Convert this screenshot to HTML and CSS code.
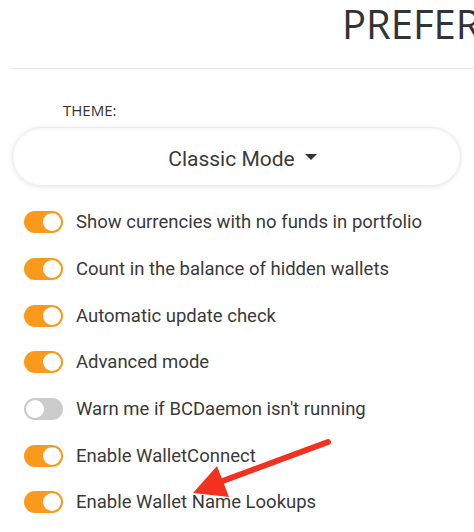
FILE: index.html
```html
<!DOCTYPE html>
<html>
<head>
<meta charset="utf-8">
<link rel="stylesheet" href="styles.css">
</head>
<body>
<div class="page">
  <header class="header">
    <h1 class="title">PREFERENCES</h1>
  </header>
  <section class="theme">
    <div class="theme-label">THEME:</div>
    <div class="select">
      <span class="select-text">Classic Mode</span>
      <span class="caret"></span>
    </div>
  </section>
  <ul class="options">
    <li class="option"><span class="toggle on"><span class="knob"></span></span><span class="label">Show currencies with no funds in portfolio</span></li>
    <li class="option"><span class="toggle on"><span class="knob"></span></span><span class="label">Count in the balance of hidden wallets</span></li>
    <li class="option"><span class="toggle on"><span class="knob"></span></span><span class="label">Automatic update check</span></li>
    <li class="option"><span class="toggle on"><span class="knob"></span></span><span class="label">Advanced mode</span></li>
    <li class="option"><span class="toggle off"><span class="knob"></span></span><span class="label">Warn me if BCDaemon isn't running</span></li>
    <li class="option"><span class="toggle on"><span class="knob"></span></span><span class="label">Enable WalletConnect</span></li>
    <li class="option"><span class="toggle on"><span class="knob"></span></span><span class="label">Enable Wallet Name Lookups</span></li>
  </ul>
  <svg class="arrow" width="474" height="532" viewBox="0 0 474 532" xmlns="http://www.w3.org/2000/svg">
    <line x1="328" y1="442" x2="220" y2="482" stroke="#f2321f" stroke-width="6" stroke-linecap="round"/>
    <polygon points="193,493 217,466 229,497" fill="#f2321f"/>
  </svg>
</div>
</body>
</html>
```
FILE: styles.css
```css
html, body {
  margin: 0;
  padding: 0;
  background: #ffffff;
}
.page {
  position: relative;
  width: 474px;
  height: 532px;
  overflow: hidden;
  background: #ffffff;
}
.header {
  margin-left: 12px;
  border-bottom: 1px solid #e6e6e6;
  box-sizing: border-box;
  height: 69px;
  overflow: hidden;
}
.title {
  margin: 0;
  padding-left: 330px;
  font-family: "Open Sans", sans-serif;
  font-weight: 400;
  font-size: 40px;
  line-height: 48px;
  color: #333333;
  white-space: nowrap;
}
.theme {
  margin-top: 31px;
}
.theme-label {
  margin-left: 63px;
  font-family: "Open Sans", sans-serif;
  font-size: 15px;
  line-height: 20px;
  color: #333333;
}
.select {
  margin: 7px 0 0 12px;
  width: 449px;
  height: 59px;
  box-sizing: border-box;
  border: 1px solid #ebebeb;
  border-radius: 30px;
  box-shadow: 0 1px 5px rgba(0,0,0,0.10), inset 0 2px 3px rgba(0,0,0,0.035);
  display: flex;
  align-items: center;
  justify-content: center;
  gap: 10px;
  padding: 4px 0 0 12px;
}
.select-text {
  font-family: Roboto, sans-serif;
  font-size: 21px;
  color: #3a3a3a;
}
.caret {
  width: 0;
  height: 0;
  border-left: 6px solid transparent;
  border-right: 6px solid transparent;
  border-top: 6px solid #333333;
  margin-top: -3px;
}
.options {
  list-style: none;
  margin: 13px 0 0 24px;
  padding: 0;
}
.option {
  height: 46.67px;
  display: flex;
  align-items: center;
  gap: 13px;
}
.toggle {
  position: relative;
  flex: none;
  width: 39px;
  height: 22px;
  border-radius: 11px;
  box-sizing: border-box;
}
.toggle.on {
  background: #f99a1c;
}
.toggle.off {
  background: #cbcbcb;
}
.knob {
  position: absolute;
  top: 2px;
  width: 18px;
  height: 18px;
  border-radius: 50%;
  background: #ffffff;
}
.toggle.on .knob {
  right: 2px;
}
.toggle.off .knob {
  left: 2px;
}
.label {
  font-family: Roboto, sans-serif;
  font-size: 18.5px;
  color: #3a3a3a;
  white-space: nowrap;
}
.arrow {
  position: absolute;
  left: 0;
  top: 0;
  pointer-events: none;
}
```
